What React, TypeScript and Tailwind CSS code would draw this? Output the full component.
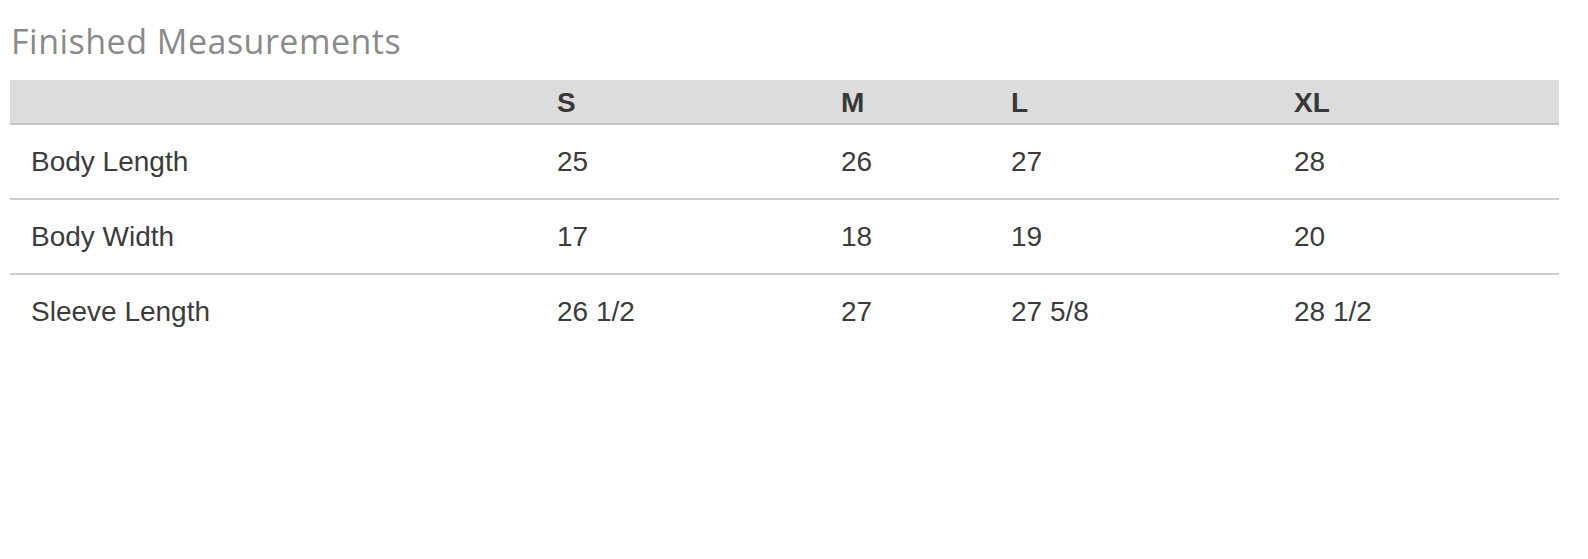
const sizes = ["S", "M", "L", "XL"];

const rows = [
  { label: "Body Length", values: ["25", "26", "27", "28"] },
  { label: "Body Width", values: ["17", "18", "19", "20"] },
  { label: "Sleeve Length", values: ["26 1/2", "27", "27 5/8", "28 1/2"] },
];

export default function App() {
  return (
    <div className="min-h-[559px] w-full bg-white">
      <h2 className="ml-[11px] pt-[21px] font-['Open_Sans',sans-serif] text-[34px] font-medium leading-[40px] tracking-[0.5px] text-[#8a8a8a]">
        Finished Measurements
      </h2>

      <table className="mt-[19px] ml-[10px] w-[1549px] table-fixed border-collapse font-['Liberation_Sans',Arial,sans-serif] text-[28px] leading-[32px]">
        <colgroup>
          <col className="w-[547px]" />
          <col className="w-[284px]" />
          <col className="w-[170px]" />
          <col className="w-[283px]" />
          <col />
        </colgroup>
        <thead>
          <tr className="border-b-2 border-[#c5c5c5] bg-[#dcdcdc]">
            <th className="h-[43px]" />
            {sizes.map((size) => (
              <th
                key={size}
                className="pt-[7px] pb-[4px] text-left font-bold text-[#383838]"
              >
                {size}
              </th>
            ))}
          </tr>
        </thead>
        <tbody>
          {rows.map((row, i) => (
            <tr
              key={row.label}
              className={
                i < rows.length - 1 ? "border-b-2 border-[#cecece]" : ""
              }
            >
              <td className="pt-[21px] pb-[20px] pl-[21px] text-[#3c3c3c]">
                {row.label}
              </td>
              {row.values.map((value, j) => (
                <td key={j} className="pt-[21px] pb-[20px] text-[#3c3c3c]">
                  {value}
                </td>
              ))}
            </tr>
          ))}
        </tbody>
      </table>
    </div>
  );
}
